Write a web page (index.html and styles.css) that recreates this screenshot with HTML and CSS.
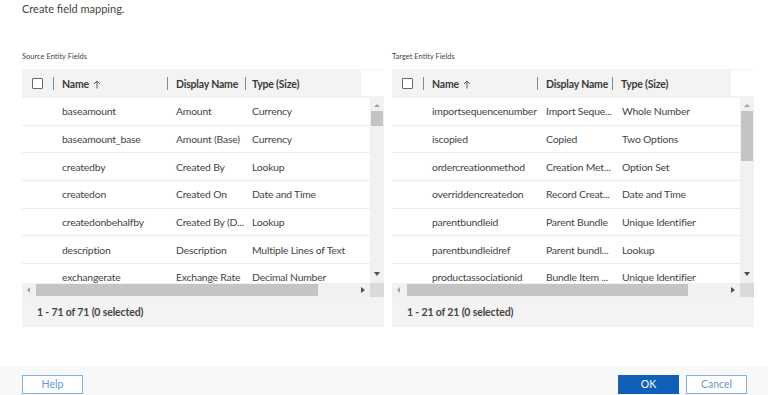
FILE: index.html
```html
<!DOCTYPE html>
<html>
<head>
<meta charset="utf-8">
<link rel="stylesheet" href="styles.css">
</head>
<body>
<div class="page">
  <main class="main">
    <p class="intro">Create field mapping.</p>
    <div class="grids">
      <section class="panel">
        <div class="panel-label">Source Entity Fields</div>
        <div class="grid">
          <div class="grid-head">
            <div class="head-cells">
              <div class="hc hc-check"><span class="checkbox"></span></div>
              <div class="hc hc-name"><span class="sep"></span>Name <svg class="sort" width="8" height="9" viewBox="0 0 8 9"><path d="M4 8.5V1M1 4l3-3 3 3" fill="none" stroke="#555" stroke-width="1"/></svg></div>
              <div class="hc hc-disp"><span class="sep"></span>Display Name</div>
              <div class="hc hc-type hc-type-tight"><span class="sep"></span>Type (Size)</div>
            </div>
            <div class="head-blank"></div>
          </div>
          <div class="grid-body">
            <div class="rows">
              <div class="row"><span class="c-name">baseamount</span><span class="c-disp">Amount</span><span class="c-type">Currency</span></div>
              <div class="row"><span class="c-name">baseamount_base</span><span class="c-disp">Amount (Base)</span><span class="c-type">Currency</span></div>
              <div class="row"><span class="c-name">createdby</span><span class="c-disp">Created By</span><span class="c-type">Lookup</span></div>
              <div class="row"><span class="c-name">createdon</span><span class="c-disp">Created On</span><span class="c-type">Date and Time</span></div>
              <div class="row"><span class="c-name">createdonbehalfby</span><span class="c-disp">Created By (D...</span><span class="c-type">Lookup</span></div>
              <div class="row"><span class="c-name">description</span><span class="c-disp">Description</span><span class="c-type">Multiple Lines of Text</span></div>
              <div class="row"><span class="c-name">exchangerate</span><span class="c-disp">Exchange Rate</span><span class="c-type">Decimal Number</span></div>
            </div>
            <div class="vscroll">
              <span class="arr arr-up"></span>
              <div class="vtrack"><div class="vthumb vthumb-left"></div></div>
              <span class="arr arr-down"></span>
            </div>
          </div>
          <div class="hscroll">
            <div class="htrack">
              <span class="arr arr-left"></span>
              <div class="hthumb hthumb-left"></div>
              <span class="arr arr-right"></span>
            </div>
            <div class="corner"></div>
          </div>
          <div class="grid-foot">1 - 71 of 71 (0 selected)</div>
        </div>
      </section>
      <section class="panel">
        <div class="panel-label">Target Entity Fields</div>
        <div class="grid">
          <div class="grid-head">
            <div class="head-cells">
              <div class="hc hc-check"><span class="checkbox"></span></div>
              <div class="hc hc-name"><span class="sep"></span>Name <svg class="sort" width="8" height="9" viewBox="0 0 8 9"><path d="M4 8.5V1M1 4l3-3 3 3" fill="none" stroke="#555" stroke-width="1"/></svg></div>
              <div class="hc hc-disp2"><span class="sep"></span>Display Name</div>
              <div class="hc hc-type"><span class="sep"></span>Type (Size)</div>
            </div>
            <div class="head-blank"></div>
          </div>
          <div class="grid-body">
            <div class="rows">
              <div class="row"><span class="c-name">importsequencenumber</span><span class="c-disp2">Import Seque...</span><span class="c-type">Whole Number</span></div>
              <div class="row"><span class="c-name">iscopied</span><span class="c-disp2">Copied</span><span class="c-type">Two Options</span></div>
              <div class="row"><span class="c-name">ordercreationmethod</span><span class="c-disp2">Creation Met...</span><span class="c-type">Option Set</span></div>
              <div class="row"><span class="c-name">overriddencreatedon</span><span class="c-disp2">Record Creat...</span><span class="c-type">Date and Time</span></div>
              <div class="row"><span class="c-name">parentbundleid</span><span class="c-disp2">Parent Bundle</span><span class="c-type">Unique Identifier</span></div>
              <div class="row"><span class="c-name">parentbundleidref</span><span class="c-disp2">Parent bundl...</span><span class="c-type">Lookup</span></div>
              <div class="row"><span class="c-name">productassociationid</span><span class="c-disp2">Bundle Item ...</span><span class="c-type">Unique Identifier</span></div>
            </div>
            <div class="vscroll">
              <span class="arr arr-up"></span>
              <div class="vtrack"><div class="vthumb vthumb-right"></div></div>
              <span class="arr arr-down"></span>
            </div>
          </div>
          <div class="hscroll">
            <div class="htrack">
              <span class="arr arr-left"></span>
              <div class="hthumb hthumb-right"></div>
              <span class="arr arr-right"></span>
            </div>
            <div class="corner"></div>
          </div>
          <div class="grid-foot">1 - 21 of 21 (0 selected)</div>
        </div>
      </section>
    </div>
  </main>
  <footer class="bar">
    <button class="btn btn-plain">Help</button>
    <div class="bar-right">
      <button class="btn btn-primary">OK</button>
      <button class="btn btn-plain btn-cancel">Cancel</button>
    </div>
  </footer>
</div>
</body>
</html>
```

FILE: styles.css
```css
* { box-sizing: border-box; }
html, body { margin: 0; padding: 0; }
body {
  width: 768px;
  height: 395px;
  overflow: hidden;
  background: #fff;
  font-family: Lato, "Open Sans", sans-serif;
  color: #333;
}
.page {
  height: 395px;
  display: flex;
  flex-direction: column;
}
.main {
  flex: 1;
  padding: 0 0 0 22px;
}
.intro {
  margin: 0;
  padding-top: 1px;
  font-size: 11px;
  line-height: 16px;
  color: #444;
}
.grids {
  display: flex;
  gap: 8px;
  margin-top: 35px;
}
.panel { width: 362px; }
.panel-label {
  font-size: 7.5px;
  line-height: 10px;
  color: #444;
  height: 17px;
}
.grid { width: 362px; }
.grid-head {
  display: flex;
  height: 29px;
  background: #f3f3f3;
}
.head-cells {
  flex: 1;
  display: flex;
  align-items: center;
  font-size: 10.5px;
  font-weight: 700;
  letter-spacing: -0.2px;
  color: #3a3a3a;
}
.head-blank {
  width: 23px;
  margin: 1px 0 2px;
  background: #fff;
}
.hc {
  display: flex;
  align-items: center;
  height: 100%;
  white-space: nowrap;
}
.sep {
  display: inline-block;
  width: 1px;
  height: 13px;
  background: #888;
  margin-right: 8px;
}
.hc-check { width: 31px; padding-left: 10px; }
.checkbox {
  display: inline-block;
  width: 11px;
  height: 11px;
  border: 1px solid #666;
  border-radius: 1px;
  background: #fff;
}
.hc-name { width: 114px; }
.hc-disp { width: 78px; }
.hc-disp2 { width: 75px; }
.hc-type { flex: 1; }
.hc-type-tight .sep { margin-right: 6px; }
.sort { margin-left: 4px; margin-top: 1px; }

.grid-body {
  display: flex;
  height: 185px;
  overflow: hidden;
}
.rows {
  flex: 1;
  overflow: hidden;
  font-size: 10.4px;
  letter-spacing: -0.2px;
  color: #444;
}
.row {
  display: flex;
  align-items: center;
  height: 27.67px;
  border-bottom: 1px solid #ececec;
  white-space: nowrap;
}
.c-name { width: 154px; padding-left: 40px; }
.c-disp { width: 76px; }
.c-disp2 { width: 76px; }
.c-type { flex: 1; }

.vscroll {
  width: 14px;
  background: #f1f1f1;
  display: flex;
  flex-direction: column;
  align-items: center;
}
.vtrack {
  flex: 1;
  width: 100%;
  padding: 0 1px;
}
.vthumb { background: #c4c4c4; width: 100%; }
.vthumb-left { margin-top: 0; height: 15px; }
.vthumb-right { height: 50px; }
.arr { display: block; width: 0; height: 0; }
.arr-up {
  margin: 6px 0 4px;
  border-left: 3px solid transparent;
  border-right: 3px solid transparent;
  border-bottom: 3px solid #a3a3a3;
}
.arr-down {
  margin: 4px 0 7px;
  border-left: 3.5px solid transparent;
  border-right: 3.5px solid transparent;
  border-top: 4px solid #505050;
}
.hscroll {
  display: flex;
  height: 14px;
}
.htrack {
  flex: 1;
  background: #f1f1f1;
  display: flex;
  align-items: center;
  padding: 0 0 0 5px;
}
.arr-left {
  border-top: 3px solid transparent;
  border-bottom: 3px solid transparent;
  border-right: 3px solid #a3a3a3;
  margin-right: 6px;
}
.arr-right {
  border-top: 3.5px solid transparent;
  border-bottom: 3.5px solid transparent;
  border-left: 4px solid #505050;
  margin-left: auto;
  margin-right: 5px;
}
.hthumb { height: 12px; background: #c4c4c4; }
.hthumb-left { width: 282px; }
.hthumb-right { width: 281px; margin-left: 1px; }
.corner { width: 14px; background: #dadada; }
.grid-foot {
  height: 30px;
  background: #f3f3f3;
  font-size: 10.5px;
  font-weight: 700;
  letter-spacing: -0.15px;
  color: #444;
  display: flex;
  align-items: center;
  padding-left: 15px;
}

.bar {
  height: 28px;
  background: #f8f8f8;
  display: flex;
  align-items: center;
  justify-content: space-between;
  padding: 0 21px 0 22px;
}
.bar-right { display: flex; gap: 7px; }
.btn {
  width: 61px;
  height: 19px;
  margin-top: 6px;
  font-family: Lato, "Open Sans", sans-serif;
  font-size: 10.5px;
  padding: 0;
  border-radius: 0;
}
.btn-plain {
  background: #fff;
  border: 1px solid #7fb2ea;
  color: #5b9be0;
}
.btn-cancel { color: #6f93c4; }
.btn-primary {
  background: #1160b7;
  border: 1px solid #1160b7;
  color: #fff;
}
```
